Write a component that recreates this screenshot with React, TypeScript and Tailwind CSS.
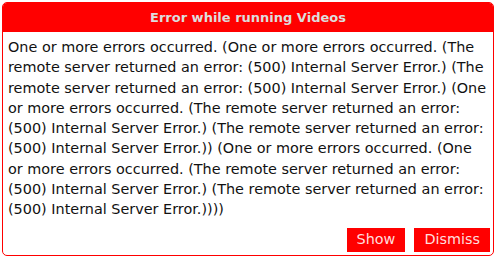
export default function App() {
  const message =
    'One or more errors occurred. (One or more errors occurred. (The remote server returned an error: (500) Internal Server Error.) (The remote server returned an error: (500) Internal Server Error.) (One or more errors occurred. (The remote server returned an error: (500) Internal Server Error.) (The remote server returned an error: (500) Internal Server Error.)) (One or more errors occurred. (One or more errors occurred. (The remote server returned an error: (500) Internal Server Error.) (The remote server returned an error: (500) Internal Server Error.))))';

  return (
    <div className="h-[257px] w-[495px] bg-white pl-[2px] pt-[2px]">
      <div className="flex h-[254px] w-[492px] flex-col overflow-hidden rounded-[5px] border border-[#ff0000] bg-white font-['DejaVu_Sans',sans-serif]">
        <div className="flex h-[29px] shrink-0 items-center justify-center bg-[#ff0000] text-[13px] font-bold text-[#dddddd]">
          Error while running Videos
        </div>
        <p className="m-0 flex-1 px-[5px] pt-[5px] text-[14.4px] leading-[20.3px] text-[#111111]">{message}</p>
        <div className="flex justify-end gap-[9px] pb-[3px] pr-[3px]">
          <button className="h-[24px] bg-[#ff0000] px-[10px] text-[14.4px] text-[#ffdddd]" type="button">
            Show
          </button>
          <button className="h-[24px] bg-[#ff0000] px-[10px] text-[14.4px] text-[#ffdddd]" type="button">
            Dismiss
          </button>
        </div>
      </div>
    </div>
  );
}
